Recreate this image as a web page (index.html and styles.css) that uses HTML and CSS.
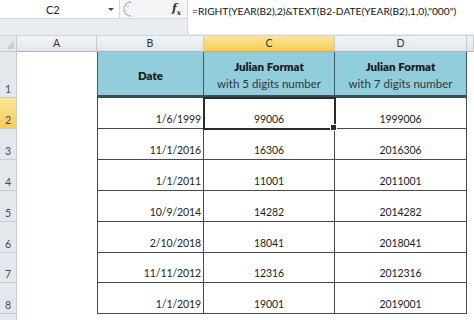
FILE: index.html
```html
<!DOCTYPE html>
<html lang="en">
<head>
    <meta charset="UTF-8">
    <title>Julian Format</title>
    <link rel="stylesheet" href="styles.css">
</head>
<body>
    <div class="formula-bar">
        <div class="left-side">
            <div class="top-row">
                <div class="namebox">
                    <span class="cell-name">C2</span>
                    <span class="arrow"></span>
                </div>
                <div class="grip">
                    <svg width="10" height="16" viewBox="0 0 10 16">
                        <path d="M9 1 A7 7 0 0 0 9 15" fill="none" stroke="#b9c0c9" stroke-width="1.5"/>
                        <rect x="5" y="5" width="2" height="1" fill="#b9c0c9"/>
                    </svg>
                </div>
                <div class="fx">f<sub>x</sub></div>
            </div>
        </div>
        <div class="formula">=RIGHT(YEAR(B2),2)&amp;TEXT(B2-DATE(YEAR(B2),1,0),"000")</div>
    </div>

    <div class="sheet">
        <div class="corner"></div>
        <div class="col-head">A</div>
        <div class="col-head">B</div>
        <div class="col-head active">C</div>
        <div class="col-head">D</div>
        <div class="col-head"></div>

        <div class="row-head">1</div>
        <div class="cell"></div>
        <div class="th first"><b>Date</b></div>
        <div class="th"><b>Julian Format</b><span>with 5 digits number</span></div>
        <div class="th"><b>Julian Format</b><span>with 7 digits number</span></div>
        <div class="cell"></div>

        <div class="row-head active">2</div>
        <div class="cell"></div>
        <div class="td date">1/6/1999</div>
        <div class="td num selected">99006</div>
        <div class="td num">1999006</div>
        <div class="cell"></div>

        <div class="row-head">3</div>
        <div class="cell"></div>
        <div class="td date">11/1/2016</div>
        <div class="td num">16306</div>
        <div class="td num">2016306</div>
        <div class="cell"></div>

        <div class="row-head">4</div>
        <div class="cell"></div>
        <div class="td date">1/1/2011</div>
        <div class="td num">11001</div>
        <div class="td num">2011001</div>
        <div class="cell"></div>

        <div class="row-head">5</div>
        <div class="cell"></div>
        <div class="td date">10/9/2014</div>
        <div class="td num">14282</div>
        <div class="td num">2014282</div>
        <div class="cell"></div>

        <div class="row-head">6</div>
        <div class="cell"></div>
        <div class="td date">2/10/2018</div>
        <div class="td num">18041</div>
        <div class="td num">2018041</div>
        <div class="cell"></div>

        <div class="row-head">7</div>
        <div class="cell"></div>
        <div class="td date">11/11/2012</div>
        <div class="td num">12316</div>
        <div class="td num">2012316</div>
        <div class="cell"></div>

        <div class="row-head">8</div>
        <div class="cell"></div>
        <div class="td date">1/1/2019</div>
        <div class="td num">19001</div>
        <div class="td num">2019001</div>
        <div class="cell"></div>

        <div class="row-head"></div>
        <div class="cell"></div>
        <div class="cell"></div>
        <div class="cell"></div>
        <div class="cell"></div>
        <div class="cell"></div>
    </div>
</body>
</html>
```

FILE: styles.css
```css
* {
    box-sizing: border-box;
}
body {
    margin: 0;
    width: 474px;
    height: 320px;
    overflow: hidden;
    background: #fff;
    font-family: "Lato", "Open Sans", sans-serif;
    color: #222;
}

/* formula bar */
.formula-bar {
    display: flex;
    height: 36px;
    background: #e9ecf0;
    border-bottom: 1px solid #cfd4da;
}
.left-side {
    width: 187px;
}
.top-row {
    display: flex;
    height: 19px;
    background: #f4f5f7;
    border-bottom: 1px solid #d4d8de;
}
.namebox {
    width: 120px;
    background: #fff;
    border-right: 1px solid #d4d8de;
    display: flex;
    align-items: center;
    font-size: 11px;
    color: #222;
}
.cell-name {
    margin-left: 46px;
}
.arrow {
    margin-left: auto;
    margin-right: 5px;
    border-left: 3px solid transparent;
    border-right: 3px solid transparent;
    border-top: 3px solid #444;
}
.grip {
    width: 40px;
    padding: 1px 0 0 2px;
}
.fx {
    width: 27px;
    font-family: "DejaVu Serif", serif;
    font-style: italic;
    font-weight: bold;
    font-size: 11px;
    color: #333;
    padding: 2px 0 0 12px;
}
.fx sub {
    font-size: 7px;
}
.formula {
    flex: 1;
    height: 34px;
    background: #fff;
    border-left: 1px solid #d4d8de;
    font-size: 10.2px;
    padding: 5px 0 0 4px;
    color: #111;
    white-space: nowrap;
}

/* sheet grid */
.sheet {
    display: grid;
    grid-template-columns: 17px 80px 107px 131px 132px 1fr;
    grid-template-rows: 16px 46px 31px 31px 31px 31px 31px 30px 31px 20px;
}
.corner {
    background: #e4e8ed;
    border-right: 1px solid #c5cbd3;
    border-bottom: 1px solid #c5cbd3;
    position: relative;
}
.corner::after {
    content: "";
    position: absolute;
    right: 2px;
    bottom: 2px;
    border-left: 8px solid transparent;
    border-bottom: 8px solid #c8cdd4;
}
.col-head {
    background: linear-gradient(#f2f4f7, #e2e6eb);
    border-right: 1px solid #c5cbd3;
    border-bottom: 1px solid #aab3be;
    font-size: 10.5px;
    color: #333;
    text-align: center;
    line-height: 15px;
}
.col-head.active {
    background: linear-gradient(#fbe49b, #f6cc55);
    border-bottom: 1px solid #e0a63a;
}
.row-head {
    background: #e4e8ed;
    border-right: 1px solid #c5cbd3;
    border-bottom: 1px solid #c5cbd3;
    font-size: 10.5px;
    color: #3c4a5c;
    display: flex;
    align-items: flex-end;
    justify-content: center;
    padding-bottom: 2px;
}
.row-head.active {
    background: linear-gradient(#fbe49b, #f6cc55);
}
.cell {
    background: #fff;
}

/* table */
.th {
    background: #92cddc;
    border-right: 1px solid #3d5a68;
    border-bottom: 3px solid #34505d;
    display: flex;
    flex-direction: column;
    align-items: center;
    justify-content: center;
    font-size: 11.5px;
    color: #1b1b1b;
    line-height: 17px;
    padding-top: 2px;
}
.th.first {
    border-left: 1px solid #3d5a68;
    padding-top: 4px;
}
.th b {
    font-weight: 800;
}
.th span {
    color: #333;
}
.td {
    border-right: 1px solid #4a4a4a;
    border-bottom: 1px solid #4a4a4a;
    display: flex;
    align-items: flex-end;
    padding-bottom: 3px;
    font-size: 10.5px;
    color: #222;
    letter-spacing: -0.1px;
}
.td.date {
    border-left: 1px solid #4a4a4a;
    justify-content: flex-end;
    padding-right: 2px;
}
.td.num {
    justify-content: center;
}
.td.selected {
    position: relative;
    outline: 2px solid #2b2b2b;
    outline-offset: -1px;
}
.td.selected::after {
    content: "";
    position: absolute;
    right: -3px;
    bottom: -3px;
    width: 5px;
    height: 5px;
    background: #2b2b2b;
    border: 1px solid #fff;
}
```
